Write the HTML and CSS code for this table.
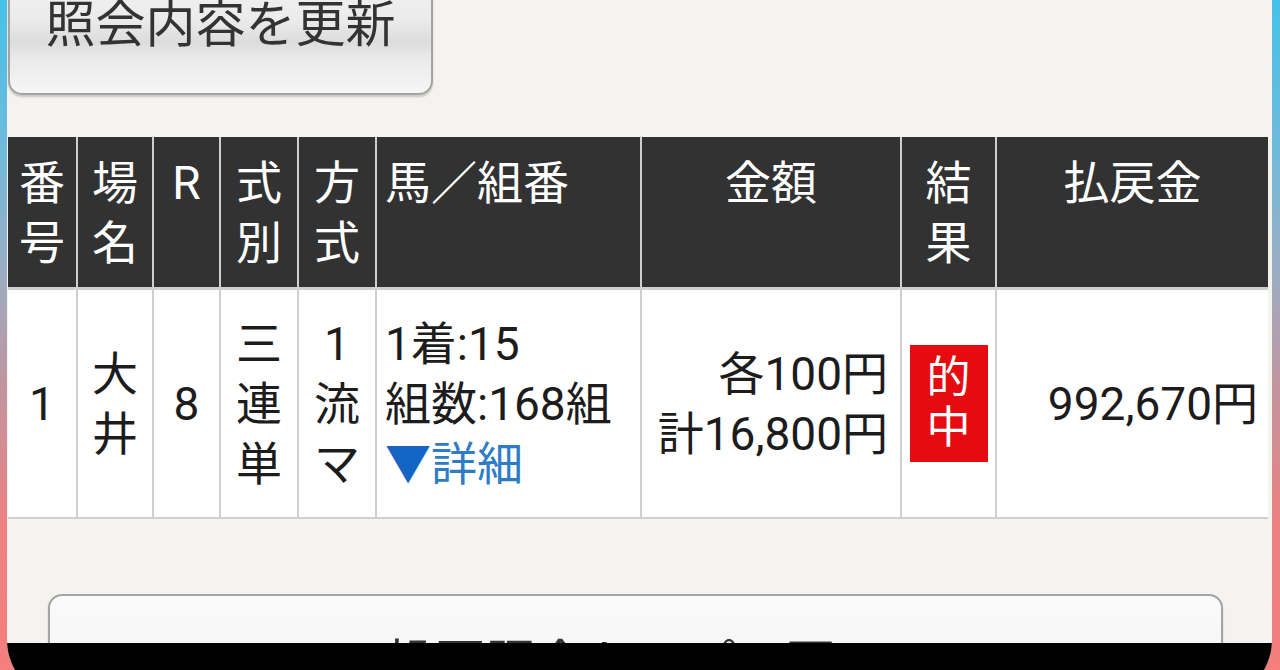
FILE: index.html
```html
<!DOCTYPE html>
<html lang="ja">
<head>
<meta charset="utf-8">
<title>照会結果</title>
<link rel="stylesheet" href="styles.css">
</head>
<body>
<div class="frame">
  <div class="screen">
    <main class="content">
      <button class="btn btn-top" type="button">照会内容を更新</button>

      <div class="grid" role="table">
        <div class="th c-center" role="columnheader">番号</div>
        <div class="th c-center" role="columnheader">場名</div>
        <div class="th c-center" role="columnheader">R</div>
        <div class="th c-center" role="columnheader">式別</div>
        <div class="th c-center" role="columnheader">方式</div>
        <div class="th c-left" role="columnheader">馬／組番</div>
        <div class="th c-center" role="columnheader">金額</div>
        <div class="th c-center" role="columnheader">結果</div>
        <div class="th c-center" role="columnheader">払戻金</div>

        <div class="td c-center" role="cell">1</div>
        <div class="td c-center" role="cell">大<br>井</div>
        <div class="td c-center" role="cell">8</div>
        <div class="td c-center" role="cell">三<br>連<br>単</div>
        <div class="td c-center" role="cell">1<br>流<br>マ</div>
        <div class="td c-left" role="cell">1着:15<br>組数:168組<br><a class="detail" href="#"><span class="tri">▼</span>詳細</a></div>
        <div class="td c-right" role="cell">各100円<br>計16,800円</div>
        <div class="td c-center" role="cell"><span class="hit">的<br>中</span></div>
        <div class="td c-right pay" role="cell">992,670円</div>
      </div>

      <button class="btn btn-bottom" type="button">投票照会トップへ戻る</button>
    </main>
    <div class="navbar"></div>
  </div>
</div>
</body>
</html>
```

FILE: styles.css
```css
html, body {
  margin: 0;
  padding: 0;
  width: 1280px;
  height: 670px;
  overflow: hidden;
}

body {
  font-family: Roboto, "Noto Sans CJK JP", sans-serif;
}

.frame {
  width: 1280px;
  height: 670px;
  overflow: hidden;
  background: linear-gradient(to bottom, #45c2e8 0%, #6fbadb 22%, #9aaec4 40%, #c2949f 58%, #ec8182 78%, #f47f7d 100%);
}

.screen {
  margin: 0 8px 0 7px;
  height: 700px;
  border-radius: 0 0 60px 60px;
  overflow: hidden;
  background: #f4f3ef;
  display: flex;
  flex-direction: column;
}

.content {
  height: 643px;
  flex: 0 0 643px;
  overflow: hidden;
  display: flex;
  flex-direction: column;
  align-items: flex-start;
}

.navbar {
  flex: 1;
  background: #000;
}

.btn {
  font-family: "Noto Sans CJK JP", sans-serif;
  font-size: 50px;
  line-height: 60px;
  color: #333;
  border: 2px solid #a4a4a4;
  border-radius: 14px;
  box-shadow: 0 2px 2px rgba(0, 0, 0, 0.18);
  flex: none;
  display: block;
  box-sizing: border-box;
  text-align: center;
}

.btn-top {
  margin: -30px 0 0 1px;
  width: 425px;
  padding: 18px 0 43px;
  background: linear-gradient(to bottom, #f3f3f3 0%, #ebebeb 40%, #dcdcdc 58%, #e9e9e9 70%, #f6f6f6 100%);
}

.grid {
  margin: 42px 0 0 1px;
  width: 1260px;
  display: grid;
  grid-template-columns: 68px 74px 65px 76px 76px 263px 258px 93px 271px;
  grid-template-rows: 150px 227px;
  column-gap: 2px;
  row-gap: 3px;
  padding-bottom: 2px;
  background: #cfcfcf;
  flex: none;
}

.th {
  background: #323232;
  color: #fff;
  font-size: 46px;
  line-height: 60px;
  padding: 16px 4px 0;
  box-sizing: border-box;
}

.td {
  background: #fff;
  color: #1c1c1c;
  font-size: 46px;
  line-height: 60px;
  display: flex;
  flex-direction: column;
  justify-content: center;
}

.c-center { text-align: center; }
.th.c-left { text-align: left; padding-left: 8px; }
.td.c-left { text-align: left; padding-left: 8px; }
.td.c-right { text-align: right; padding-right: 12px; }
.td.pay { padding-right: 10px; }

.detail {
  color: #2f7cc6;
  text-decoration: none;
}

.tri {
  color: #1464c4;
}

.td .hit {
  align-self: center;
  display: block;
  width: 78px;
  box-sizing: border-box;
  padding: 8px 0 9px;
  background: #e50b10;
  color: #fff;
  font-size: 44px;
  line-height: 50px;
  text-align: center;
}

.btn-bottom {
  margin: 75px 0 0 41px;
  width: 1175px;
  padding: 33px 0 30px;
  background: linear-gradient(to bottom, #fafafa 0%, #f2f2f2 100%);
}
```
